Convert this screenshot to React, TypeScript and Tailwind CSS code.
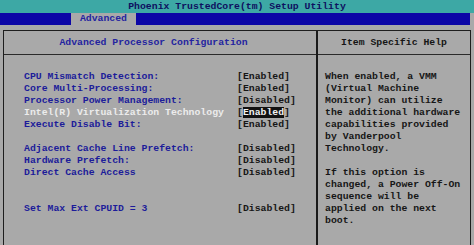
import React from 'react';

interface Setting {
  label: string;
  value: string;
  selected?: boolean;
}

const settings: (Setting | null)[] = [
  { label: 'CPU Mismatch Detection:', value: 'Enabled' },
  { label: 'Core Multi-Processing:', value: 'Enabled' },
  { label: 'Processor Power Management:', value: 'Disabled' },
  { label: 'Intel(R) Virtualization Technology', value: 'Enabled', selected: true },
  { label: 'Execute Disable Bit:', value: 'Enabled' },
  null,
  { label: 'Adjacent Cache Line Prefetch:', value: 'Disabled' },
  { label: 'Hardware Prefetch:', value: 'Disabled' },
  { label: 'Direct Cache Access', value: 'Disabled' },
  null,
  null,
  { label: 'Set Max Ext CPUID = 3', value: 'Disabled' },
];

const helpLines = [
  'When enabled, a VMM',
  '(Virtual Machine',
  'Monitor) can utilize',
  'the additional hardware',
  'capabilities provided',
  'by Vanderpool',
  'Technology.',
  '',
  'If this option is',
  'changed, a Power Off-On',
  'sequence will be',
  'applied on the next',
  'boot.',
];

const App: React.FC = () => {
  return (
    <div
      className="w-[474px] h-[245px] overflow-hidden bg-[#a9a9a9] font-bold text-[9.8px] leading-[12px] whitespace-pre"
      style={{ fontFamily: '"Liberation Mono", "DejaVu Sans Mono", monospace' }}
    >
      <div className="h-[13px] bg-[#3da8a5] text-[#0e1060] text-center leading-[13px]">
        Phoenix TrustedCore(tm) Setup Utility
      </div>
      <div className="h-[12px] w-[470px] bg-[#0c06a6] pl-[71px]">
        <div className="w-[65px] h-[12px] bg-[#a9a9a9] text-[#2424a0] text-center leading-[12px]">
          Advanced
        </div>
      </div>

      <div className="mt-[5px] ml-[3px] w-[468px] h-[220px] border-l border-t border-r border-[#1e1e1e] flex">
        <div className="w-[312px] flex flex-col">
          <div className="h-[24px] border-b border-[#2a2a2a] flex items-center justify-center pr-[13px] text-[#2424a0]">
            Advanced Processor Configuration
          </div>
          <div className="pt-[16px] pl-[20px] flex flex-col">
            {settings.map((s, i) =>
              s ? (
                <div key={i} className="flex h-[12px]">
                  <span
                    className={`w-[213px] ${s.selected ? 'text-[#ececec]' : 'text-[#1c1c9a]'}`}
                  >
                    {s.label}
                  </span>
                  <span className="text-[#161616]">
                    [
                    <span className={s.selected ? 'bg-[#111111] text-[#f2f2f2]' : ''}>{s.value}</span>]
                  </span>
                </div>
              ) : (
                <div key={i} className="h-[12px]" />
              )
            )}
          </div>
        </div>

        <div className="w-[2px] bg-[#1a1a1a]" />

        <div className="flex-1 flex flex-col">
          <div className="h-[24px] border-b border-[#2a2a2a] flex items-center justify-center text-[#161616]">
            Item Specific Help
          </div>
          <div className="pt-[16px] pl-[7px] flex flex-col text-[#161616]">
            {helpLines.map((line, i) => (
              <div key={i} className="h-[12px]">
                {line}
              </div>
            ))}
          </div>
        </div>
      </div>
    </div>
  );
};

export default App;
